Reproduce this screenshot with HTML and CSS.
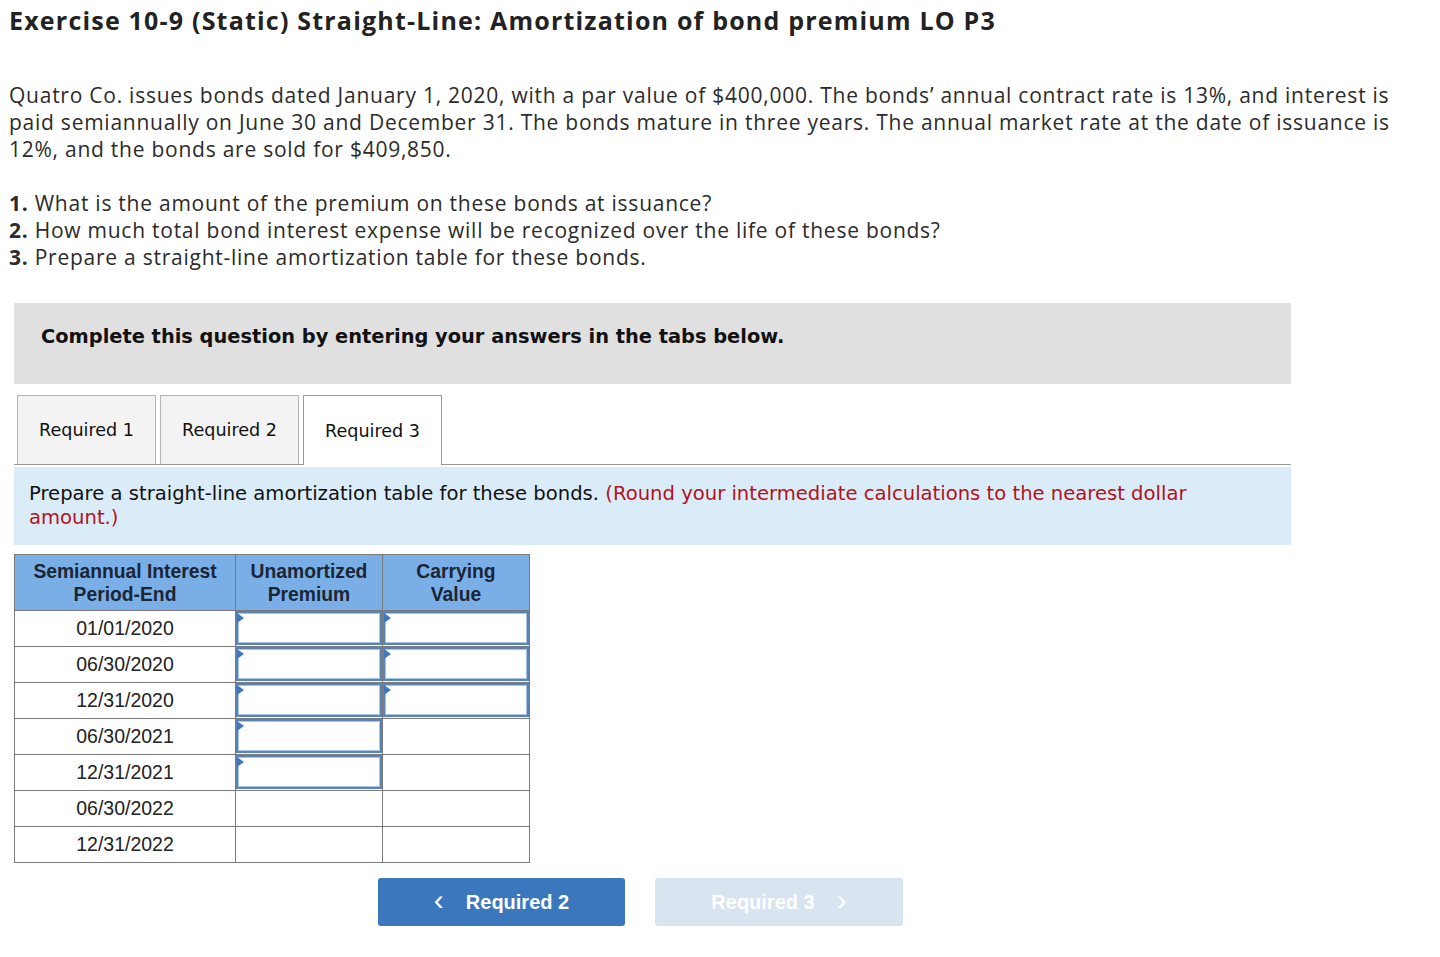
FILE: index.html
```html
<!DOCTYPE html>
<html>
<head>
<meta charset="utf-8">
<link rel="stylesheet" href="styles.css">
</head>
<body>
<div class="page">
  <h1 class="title">Exercise 10-9 (Static) Straight-Line: Amortization of bond premium LO P3</h1>
  <p class="intro">Quatro Co. issues bonds dated January 1, 2020, with a par value of $400,000. The bonds’ annual contract rate is 13%, and interest is paid semiannually on June 30 and December 31. The bonds mature in three years. The annual market rate at the date of issuance is 12%, and the bonds are sold for $409,850.</p>
  <ol class="reqs">
    <li><b>1.</b> What is the amount of the premium on these bonds at issuance?</li>
    <li><b>2.</b> How much total bond interest expense will be recognized over the life of these bonds?</li>
    <li><b>3.</b> Prepare a straight-line amortization table for these bonds.</li>
  </ol>
  <div class="banner">Complete this question by entering your answers in the tabs below.</div>
  <div class="tabs">
    <div class="tab">Required 1</div>
    <div class="tab">Required 2</div>
    <div class="tab active">Required 3</div>
  </div>
  <div class="info"><p class="line">Prepare a straight-line amortization table for these bonds. <span class="red">(Round your intermediate calculations to the nearest dollar</span></p><p class="line red">amount.)</p></div>
  <table class="amort">
    <thead>
      <tr><th class="c1">Semiannual Interest<br>Period-End</th><th class="c2">Unamortized<br>Premium</th><th class="c3">Carrying<br>Value</th></tr>
    </thead>
    <tbody>
      <tr><td>01/01/2020</td><td class="in"><div class="box"></div></td><td class="in"><div class="box"></div></td></tr>
      <tr><td>06/30/2020</td><td class="in"><div class="box"></div></td><td class="in"><div class="box"></div></td></tr>
      <tr><td>12/31/2020</td><td class="in"><div class="box"></div></td><td class="in"><div class="box"></div></td></tr>
      <tr><td>06/30/2021</td><td class="in"><div class="box"></div></td><td></td></tr>
      <tr><td>12/31/2021</td><td class="in"><div class="box"></div></td><td></td></tr>
      <tr><td>06/30/2022</td><td></td><td></td></tr>
      <tr><td>12/31/2022</td><td></td><td></td></tr>
    </tbody>
  </table>
  <div class="nav">
    <div class="btn prev"><span class="chev">&lsaquo;</span>Required 2</div>
    <div class="btn next">Required 3<span class="chev">&rsaquo;</span></div>
  </div>
</div>
</body>
</html>
```
FILE: styles.css
```css
html, body { margin: 0; padding: 0; background: #fff; }
.page { padding: 0 0 0 9px; width: 1400px; color: #2b2b2b; }
.title {
  font-family: "Open Sans", Lato, sans-serif;
  font-weight: 700; font-size: 25px; margin: 0; padding-top: 4px;
  line-height: 32px; color: #222; letter-spacing: 1.2px;
}
.intro {
  font-family: "Open Sans", Lato, sans-serif;
  font-size: 21px; line-height: 27px; margin: 46px 0 0 0; width: 1400px;
  color: #2b2b2b; letter-spacing: 0.75px;
}
.reqs {
  list-style: none; padding: 0; margin: 27px 0 0 0;
  font-family: "Open Sans", Lato, sans-serif; font-size: 21px; line-height: 27px;
  letter-spacing: 0.75px; color: #2b2b2b;
}
.reqs b { font-weight: 700; }
.banner {
  margin: 32px 0 0 5px; width: 1250px; height: 81px; background: #e0e0e0;
  padding-left: 27px; box-sizing: content-box;
  font-family: "DejaVu Sans", Verdana, sans-serif; font-weight: 700; font-size: 19.4px;
  line-height: 68px; color: #111;
}
.tabs { display: flex; gap: 4px; margin: 11px 0 0 5px; width: 1274px; border-bottom: 1px solid #999; padding-left: 3px; }
.tab {
  width: 139px; height: 69px; box-sizing: border-box; border: 1px solid #b4b4b4; border-bottom: none;
  background: #f3f3f3; font-family: "DejaVu Sans", Verdana, sans-serif; font-size: 17.6px;
  color: #111; display: flex; align-items: center; justify-content: center;
}
.tab.active { background: #fff; border-color: #999; height: 70px; margin-bottom: -1px; }
.info {
  margin: 2px 0 0 5px; width: 1277px; height: 78px; box-sizing: border-box;
  background: #dbecf9; padding: 15px 15px 0 15px;
  font-family: "DejaVu Sans", Verdana, sans-serif; font-size: 19.6px; line-height: 24px; color: #111;
}
.line { margin: 0; white-space: nowrap; }
.red { color: #b1121c; }
.amort {
  margin: 9px 0 0 5px; border-collapse: collapse;
  font-family: "Liberation Sans", Arial, sans-serif; font-size: 19.5px; color: #222;
}
.amort th {
  background: #7aaee6; font-weight: 700; font-size: 19.3px; line-height: 23px;
  border: 1px solid #7a7a7a; height: 56px; padding: 0; box-sizing: border-box; color: #1a2634;
}
.amort .c1 { width: 221px; }
.amort .c2 { width: 147px; }
.amort .c3 { width: 147px; }
.amort td {
  border: 1px solid #7a7a7a; height: 36px; padding: 0; text-align: center; box-sizing: border-box;
}
.amort td.in { padding: 0; position: relative; vertical-align: top; }
.box {
  height: 34px; margin: 0; box-sizing: border-box;
  border: 2px solid #5b82b5; box-shadow: inset 0 0 0 1px #a8c4e6; background: #fff;
  position: relative;
}
.box::before {
  content: ""; position: absolute; left: -1px; top: 0; width: 0; height: 0;
  border-top: 5px solid transparent; border-bottom: 5px solid transparent; border-left: 7px solid #3f78c0;
}
.nav { display: flex; gap: 30px; margin: 15px 0 0 369px; }
.btn {
  width: 247px; height: 48px; border-radius: 3px; display: flex; align-items: center; justify-content: center;
  font-family: "Liberation Sans", Arial, sans-serif; font-weight: 700; font-size: 20px; color: #fff;
}
.btn.prev { background: #3a77bd; }
.btn.next { background: #d9e4f1; width: 248px; }
.chev { font-size: 30px; font-weight: 400; line-height: 1; position: relative; top: -2px; }
.prev .chev { margin-right: 22px; }
.next .chev { margin-left: 22px; }
```
